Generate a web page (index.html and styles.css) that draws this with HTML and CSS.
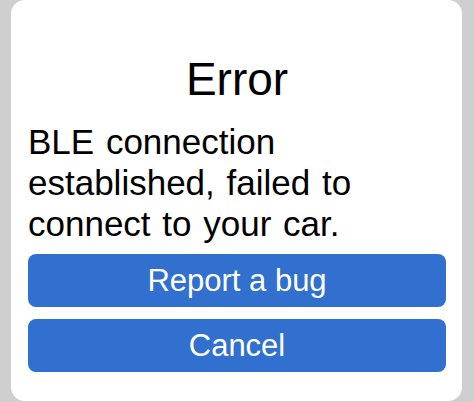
FILE: index.html
```html
<!DOCTYPE html>
<html lang="en">
<head>
    <meta charset="UTF-8">
    <meta name="viewport" content="width=device-width, initial-scale=1.0">
    <title>Error</title>
    <link rel="stylesheet" href="styles.css">
</head>
<body>
    <div class="dialog">
        <h2 class="title">Error</h2>
        <p class="message">BLE connection established, failed to connect to your car.</p>
        <div class="actions">
            <button id="reportButton" class="button">Report a bug</button>
            <button id="cancelButton" class="button">Cancel</button>
        </div>
    </div>
</body>
</html>
```

FILE: styles.css
```css
body {
    margin: 0;
    padding: 0 12px 0 11px;
    background-color: #cfcfcf;
    font-family: "Liberation Sans", Arial, sans-serif;
}

.dialog {
    background-color: #ffffff;
    border-radius: 14px;
    height: 401px;
    box-sizing: border-box;
    padding: 56px 16px 0 17px;
}

.title {
    margin: 0;
    font-size: 46px;
    font-weight: normal;
    line-height: 46px;
    text-align: center;
    color: #000;
}

.message {
    margin: 19px 0 0 0;
    font-size: 35px;
    line-height: 41px;
    word-spacing: 2px;
    color: #000;
}

.actions {
    display: flex;
    flex-direction: column;
    gap: 12px;
    margin-top: 10px;
}

.button {
    height: 53px;
    border: none;
    border-radius: 8px;
    background-color: #3170ce;
    color: white;
    font-family: inherit;
    font-size: 31px;
    padding: 0;
}
```
